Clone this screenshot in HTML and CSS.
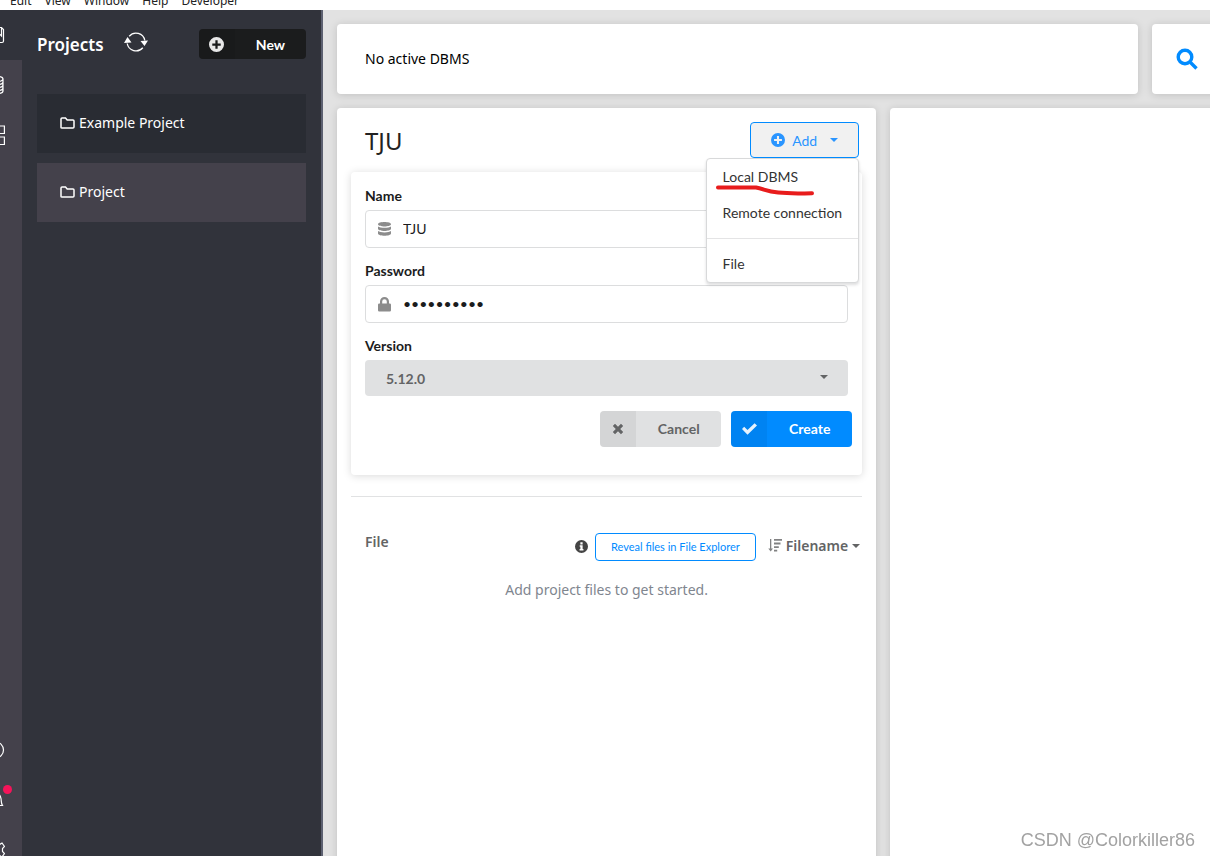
FILE: index.html
```html
<!DOCTYPE html>
<html lang="en">

<head>
    <meta charset="UTF-8">
    <meta name="viewport" content="width=device-width, initial-scale=1.0">
    <title>Projects</title>
    <link rel="stylesheet" href="styles.css">
</head>

<body>
    <nav class="menubar">
        <a href="#">Edit</a>
        <a href="#">View</a>
        <a href="#">Window</a>
        <a href="#">Help</a>
        <a href="#">Developer</a>
    </nav>

    <div class="app">
        <nav class="rail">
            <button class="rail-item active" aria-label="Projects">
                <svg width="18" height="18" viewBox="0 0 18 18"><path d="M2 1.500h12.500l2 2v11.500q0 1.500-1.500 1.500H2zM10.500 1.500v8.500l2-2 2 2V1.500" /></svg>
            </button>
            <button class="rail-item" aria-label="DBMSs">
                <svg width="18" height="20" viewBox="0 0 18 20"><path d="M3 4c0-3.500 13-3.500 13 0s-13 3.500-13 0v12c0 3.500 13 3.500 13 0V4M3 7c0 3.500 13 3.500 13 0M3 10c0 3.500 13 3.500 13 0M3 13c0 3.500 13 3.500 13 0" /></svg>
            </button>
            <button class="rail-item" aria-label="Graph Apps">
                <svg width="20" height="20" viewBox="0 0 20 20"><path d="M1 1h7v7H1zM12 1h7.400v7.500H12zM1 12h7v7H1zM12 12h7.400v7.500H12z" /></svg>
            </button>
            <div class="rail-space"></div>
            <button class="rail-item" aria-label="Help">
                <svg width="18" height="18" viewBox="0 0 18 18"><circle cx="8.500" cy="9" r="8" /></svg>
            </button>
            <button class="rail-item" aria-label="Notifications">
                <svg width="20" height="18" viewBox="0 0 20 18"><path d="M1 14.500h16.500c-1.500-2-1-4-1.500-7C14.500 0 5 0 4 7.500c-.5 3 0 5-3 7z" /></svg>
                <span class="rail-dot"></span>
            </button>
            <button class="rail-item" aria-label="Settings">
                <svg width="20" height="20" viewBox="0 0 20 20"><path d="M8 1h4l.5 2.500 2 1L17 3l2.500 3.500-2 2v3l2 2L17 17l-2.500-1.500-2 1L12 19H8l-.5-2.500-2-1L3 17 .5 13.500l2-2v-3l-2-2L3 3l2.500 1.500 2-1z" /><circle cx="10" cy="10" r="3" /></svg>
            </button>
        </nav>

        <aside class="sidebar">
            <header class="sidebar-header">
                <h2>Projects</h2>
                <button class="refresh" aria-label="Refresh">
                    <svg width="26" height="22" viewBox="0 0 26 22">
                        <path class="arc" d="M6.200 5.200A9 9 0 0 1 21.800 9.500M19.800 16.800A9 9 0 0 1 4.200 12.500" />
                        <path class="head" d="M1 12l3.500-6 4 5.500zM25 9.500l-3.500 5.500-4-5z" />
                    </svg>
                </button>
                <button class="btn btn-black">
                    <span class="btn-icon">
                        <svg width="15" height="15" viewBox="0 0 16 16"><path fill-rule="evenodd" d="M8 0a8 8 0 1 0 0 16A8 8 0 0 0 8 0zM6.800 3.500h2.400v3.300h3.300v2.400H9.200v3.300H6.800V9.200H3.500V6.800h3.300z" /></svg>
                    </span>
                    <span class="btn-text">New</span>
                </button>
            </header>
            <div class="project-list">
                <a class="project" href="#">
                    <svg width="15" height="12" viewBox="0 0 15 12"><path d="M1 10.500V2q0-1 1-1h3.500l1.700 2H13q1 0 1 1v6q0 1-1 1H2q-1 0-1-.5z" /></svg>
                    Example Project
                </a>
                <a class="project selected" href="#">
                    <svg width="15" height="12" viewBox="0 0 15 12"><path d="M1 10.500V2q0-1 1-1h3.500l1.700 2H13q1 0 1 1v6q0 1-1 1H2q-1 0-1-.5z" /></svg>
                    Project
                </a>
            </div>
        </aside>

        <main class="main">
            <div class="top-row">
                <section class="card status">No active DBMS</section>
                <button class="card search" aria-label="Search">
                    <svg width="22" height="22" viewBox="0 0 22 22"><circle cx="9" cy="9" r="6.800" /><path d="M14.500 14.500l6 6" /></svg>
                </button>
            </div>

            <div class="columns">
                <section class="card detail">
                    <header class="detail-header">
                        <h1>TJU</h1>
                        <div class="add">
                            <button class="add-button" aria-haspopup="true" aria-expanded="true">
                                <svg width="14" height="14" viewBox="0 0 16 16"><path fill-rule="evenodd" d="M8 0a8 8 0 1 0 0 16A8 8 0 0 0 8 0zM6.800 3.500h2.400v3.300h3.300v2.400H9.200v3.300H6.800V9.200H3.500V6.800h3.300z" /></svg>
                                <span>Add</span>
                                <svg class="caret" width="8" height="4" viewBox="0 0 8 4"><path d="M0 0h8L4 4z" /></svg>
                            </button>
                            <div class="add-menu">
                                <a href="#">Local DBMS</a>
                                <a href="#">Remote connection</a>
                                <hr>
                                <a href="#">File</a>
                                <svg class="scribble" width="100" height="14" viewBox="0 0 100 14"><path d="M3 3.500H41C54 6 53 10.500 97 9.200" /></svg>
                            </div>
                        </div>
                    </header>

                    <form class="dbms-form">
                        <label for="name">Name</label>
                        <div class="field">
                            <svg width="13" height="14" viewBox="0 0 13 14"><path d="M0 2.200C0-.7 13-.7 13 2.200S0 5.100 0 2.200zM0 4.500c2 1.700 11 1.700 13 0v2.300c0 2.900-13 2.900-13 0zM0 9.100c2 1.700 11 1.700 13 0v2.500c0 3-13 3-13 0z" /></svg>
                            <input type="text" id="name" value="TJU">
                        </div>
                        <label for="password">Password</label>
                        <div class="field">
                            <svg width="13" height="15" viewBox="0 0 13 15"><path fill-rule="evenodd" d="M1.300 6.500H2V4.500a4.500 4.500 0 0 1 9 0v2h.7q1.300 0 1.300 1.300v5.400q0 1.300-1.300 1.300H1.300Q0 14.500 0 13.200V7.800q0-1.300 1.300-1.300zM4.200 6.500h4.600v-2a2.300 2.300 0 0 0-4.600 0z" /></svg>
                            <input type="password" id="password" value="0123456789">
                        </div>
                        <label for="version">Version</label>
                        <div class="select">
                            <select id="version">
                                <option>5.12.0</option>
                            </select>
                            <svg class="caret" width="8" height="4" viewBox="0 0 8 4"><path d="M0 0h8L4 4z" /></svg>
                        </div>
                        <div class="form-actions">
                            <button type="button" class="btn btn-grey">
                                <span class="btn-icon">
                                    <svg width="12" height="12" viewBox="0 0 12 12"><path d="M3 .8l3 3 3-3L11.200 3l-3 3 3 3L9 11.200l-3-3-3 3L.8 9l3-3-3-3z" /></svg>
                                </span>
                                <span class="btn-text">Cancel</span>
                            </button>
                            <button type="button" class="btn btn-blue">
                                <span class="btn-icon">
                                    <svg width="15" height="12" viewBox="0 0 15 12"><path d="M0 6l2.200-2.300 3.300 3.400L12.600.3 15 2.500 5.500 11.700z" /></svg>
                                </span>
                                <span class="btn-text">Create</span>
                            </button>
                        </div>
                    </form>

                    <hr class="divider">

                    <div class="files-header">
                        <h3>File</h3>
                        <svg class="info" width="13" height="13" viewBox="0 0 16 16"><path fill-rule="evenodd" d="M8 0a8 8 0 1 0 0 16A8 8 0 0 0 8 0zM6.600 2.800h2.800v2.600H6.600zM5.800 6.500h3.600v4.600h1v1.900H5.600v-1.900h1V8.400h-.8z" /></svg>
                        <button class="reveal">Reveal files in File Explorer</button>
                        <button class="sort">
                            <svg class="sort-icon" width="14" height="13" viewBox="0 0 14 13"><path d="M2 0h1.300v9.500H5L2.700 12.500.3 9.500H2zM6 0h8v1.800H6zM6 3.600h6.500v1.800H6zM6 7.200h4.800V9H6zM6 10.800h3.200v1.800H6z" /></svg>
                            <span>Filename</span>
                            <svg class="caret" width="8" height="4" viewBox="0 0 8 4"><path d="M0 0h8L4 4z" /></svg>
                        </button>
                    </div>
                    <p class="empty">Add project files to get started.</p>
                </section>

                <section class="card"></section>
            </div>
        </main>
    </div>

    <div class="watermark">CSDN @Colorkiller86</div>
</body>

</html>
```

FILE: styles.css
```css
* {
    box-sizing: border-box;
}

body {
    margin: 0;
    height: 100vh;
    overflow: hidden;
    font-family: "Noto Sans", sans-serif;
    font-size: 14px;
    color: #000;
    background: #fff;
}

h1,
h2,
h3,
p {
    margin: 0;
}

a {
    color: inherit;
    text-decoration: none;
}

button {
    border: none;
    padding: 0;
    background: none;
    font-family: Lato, sans-serif;
    font-size: 14px;
    cursor: pointer;
}

svg {
    flex: none;
    fill: currentColor;
}

/* window menu */
.menubar {
    height: 10px;
    padding: 0 10px;
    display: flex;
    align-items: flex-end;
    gap: 13px;
    overflow: hidden;
    font-size: 12px;
    line-height: 18px;
    color: #222;
}

/* the side rail and the right column run past the window edge */
.app {
    height: calc(100vh + 9px);
    display: flex;
}

.rail {
    width: 22px;
    flex: none;
    display: flex;
    flex-direction: column;
    background: #44414b;
    overflow: hidden;
}

.rail-item {
    position: relative;
    height: 50px;
    flex: none;
    display: flex;
    align-items: center;
    justify-content: flex-end;
    padding-right: 17px;
    color: #fff;
}

.rail-item svg {
    fill: none;
    stroke: currentColor;
    stroke-width: 1.2;
}

.rail-item.active {
    background: #31333b;
}

.rail-space {
    flex: 1;
}

.rail-dot {
    position: absolute;
    top: 10px;
    right: 10px;
    width: 9px;
    height: 9px;
    border-radius: 50%;
    background: #f6145a;
}

.sidebar {
    width: 301px;
    flex: none;
    padding: 19px 15px;
    background: #31333b;
    border-right: 2px solid #5c6070;
    color: #fff;
}

.sidebar-header {
    display: flex;
    align-items: center;
    height: 30px;
    margin-bottom: 35px;
}

.sidebar-header h2 {
    font-size: 17px;
    font-weight: 600;
}

.sidebar-header .btn {
    height: 30px;
    margin-left: auto;
}

.refresh {
    display: flex;
    margin: 0 0 4px 19px;
    color: #fff;
}

.refresh .arc {
    fill: none;
    stroke: currentColor;
    stroke-width: 1.3;
}

.project-list {
    display: flex;
    flex-direction: column;
    gap: 10px;
}

.project {
    display: flex;
    align-items: center;
    gap: 4px;
    height: 59px;
    padding: 0 23px 2px;
    background: #292c33;
    font-size: 14px;
}

.project.selected {
    background: #44414b;
}

.project svg {
    fill: none;
    stroke: currentColor;
    stroke-width: 1.5;
}

/* buttons with a shaded icon on the left */
.btn {
    display: flex;
    height: 36px;
    border-radius: 4px;
    overflow: hidden;
    font-weight: 700;
}

.btn-icon {
    width: 36px;
    display: flex;
    align-items: center;
    justify-content: center;
    align-self: stretch;
    background: rgba(0, 0, 0, 0.05);
}

.btn-text {
    flex: 1;
    align-self: center;
    padding: 0 21px;
}

.btn-black {
    background: #1b1c1d;
    color: #fff;
}

.btn-grey {
    background: #e0e1e2;
    color: #636465;
}

.btn-blue {
    background: #018bff;
    color: #fff;
}

.btn-black svg,
.btn-blue svg {
    opacity: 0.9;
}

.main {
    flex: 1;
    min-width: 0;
    margin-right: -26px;
    padding: 14px 14px 0;
    display: flex;
    flex-direction: column;
    gap: 14px;
    background: #e2e2e2;
}

.card {
    background: #fff;
    border-radius: 4px;
    box-shadow: 0 1px 8px rgba(0, 0, 0, 0.15);
}

.top-row {
    display: flex;
    gap: 14px;
    height: 70px;
}

.status {
    flex: 1;
    display: flex;
    align-items: center;
    padding: 0 28px 2px;
}

.search {
    width: 70px;
    display: flex;
    align-items: center;
    justify-content: center;
    color: #018bff;
}

.search svg {
    fill: none;
    stroke: currentColor;
    stroke-width: 3.4;
}

.columns {
    flex: 1;
    display: grid;
    grid-template-columns: 13fr 8fr;
    gap: 14px;
}

.detail {
    padding: 14px;
}

.detail-header {
    display: flex;
    align-items: center;
    justify-content: space-between;
    height: 36px;
    padding: 0 3px 0 14px;
    margin-bottom: 14px;
}

.detail-header h1 {
    font-size: 24px;
    font-weight: 400;
    color: #222;
}

.add {
    position: relative;
}

.add-button {
    display: flex;
    align-items: center;
    height: 36px;
    padding: 0 20px;
    border: 1px solid #018bff;
    border-radius: 4px;
    background: #f1f1f1;
    color: #2a95ff;
}

.add-button span {
    margin: 0 13px 0 7px;
}

.add-menu {
    position: absolute;
    top: 36px;
    right: 0;
    z-index: 2;
    display: flex;
    flex-direction: column;
    background: #fff;
    border: 1px solid #d8d9da;
    border-radius: 4px;
    box-shadow: 0 2px 3px rgba(34, 36, 38, 0.15);
    font-family: Lato, sans-serif;
    font-size: 14px;
    color: #333;
    white-space: nowrap;
}

.add-menu a {
    padding: 0 16px;
    line-height: 36px;
}

.add-menu hr {
    width: 100%;
    margin: 7px 0;
    border: none;
    border-top: 1px solid #e4e4e5;
}

/* hand-drawn underline below the first entry */
.scribble {
    position: absolute;
    top: 25px;
    left: 8px;
    fill: none;
    stroke: #e81c1c;
    stroke-width: 4;
    stroke-linecap: round;
}

.dbms-form {
    padding: 14px 14px 28px;
    border-radius: 4px;
    box-shadow: 0 1px 8px rgba(0, 0, 0, 0.15);
    font-family: Lato, sans-serif;
}

.dbms-form label {
    display: block;
    margin-bottom: 5px;
    line-height: 19px;
    font-size: 14px;
    font-weight: 700;
    color: #1b1c1d;
}

.field {
    display: flex;
    align-items: center;
    height: 38px;
    margin-bottom: 13px;
    padding-left: 12px;
    border: 1px solid #dcddde;
    border-radius: 4px;
    color: #8c8c8c;
}

.field input {
    flex: 1;
    min-width: 0;
    height: 100%;
    padding: 0 12px 2px;
    border: none;
    outline: none;
    background: none;
    font-family: Lato, sans-serif;
    font-size: 14px;
    color: #1b1c1d;
}

.select {
    position: relative;
}

.select select {
    display: block;
    width: 100%;
    height: 36px;
    padding: 0 21px;
    border: none;
    border-radius: 4px;
    appearance: none;
    background: #e0e1e2;
    font-family: Lato, sans-serif;
    font-size: 14px;
    font-weight: 700;
    color: #636465;
}

.select .caret {
    position: absolute;
    top: 15px;
    right: 20px;
    color: #636465;
    pointer-events: none;
}

.form-actions {
    display: flex;
    justify-content: flex-end;
    gap: 10px;
    margin: 15px -4px 0 0;
}

.form-actions .btn {
    min-width: 121px;
}

.form-actions .btn-text {
    padding-bottom: 1px;
}

.divider {
    margin: 21px 0 35px;
    border: none;
    border-top: 1px solid #e1e2e3;
}

.files-header {
    display: flex;
    align-items: center;
    padding: 0 2px 0 14px;
    color: #636465;
}

.files-header h3 {
    margin: 0 auto 10px 0;
    font-size: 14px;
    font-weight: 600;
}

.info {
    margin-right: 7px;
    color: #444;
}

.reveal {
    height: 28px;
    padding: 0 15px 1px;
    border: 1px solid #018bff;
    border-radius: 4px;
    background: #fff;
    font-size: 11px;
    color: #018bff;
}

.sort {
    display: flex;
    align-items: center;
    gap: 4px;
    margin-left: 12px;
    padding-bottom: 2px;
    font-family: "Noto Sans", sans-serif;
    font-weight: 600;
    color: #636465;
}

.sort-icon {
    opacity: 0.8;
}

.empty {
    margin-top: 19px;
    line-height: 20px;
    text-align: center;
    color: #7f868f;
}

.watermark {
    position: fixed;
    right: 15px;
    bottom: 5px;
    font-family: "Liberation Sans", sans-serif;
    font-size: 18px;
    color: #a2a2a2;
}
```
